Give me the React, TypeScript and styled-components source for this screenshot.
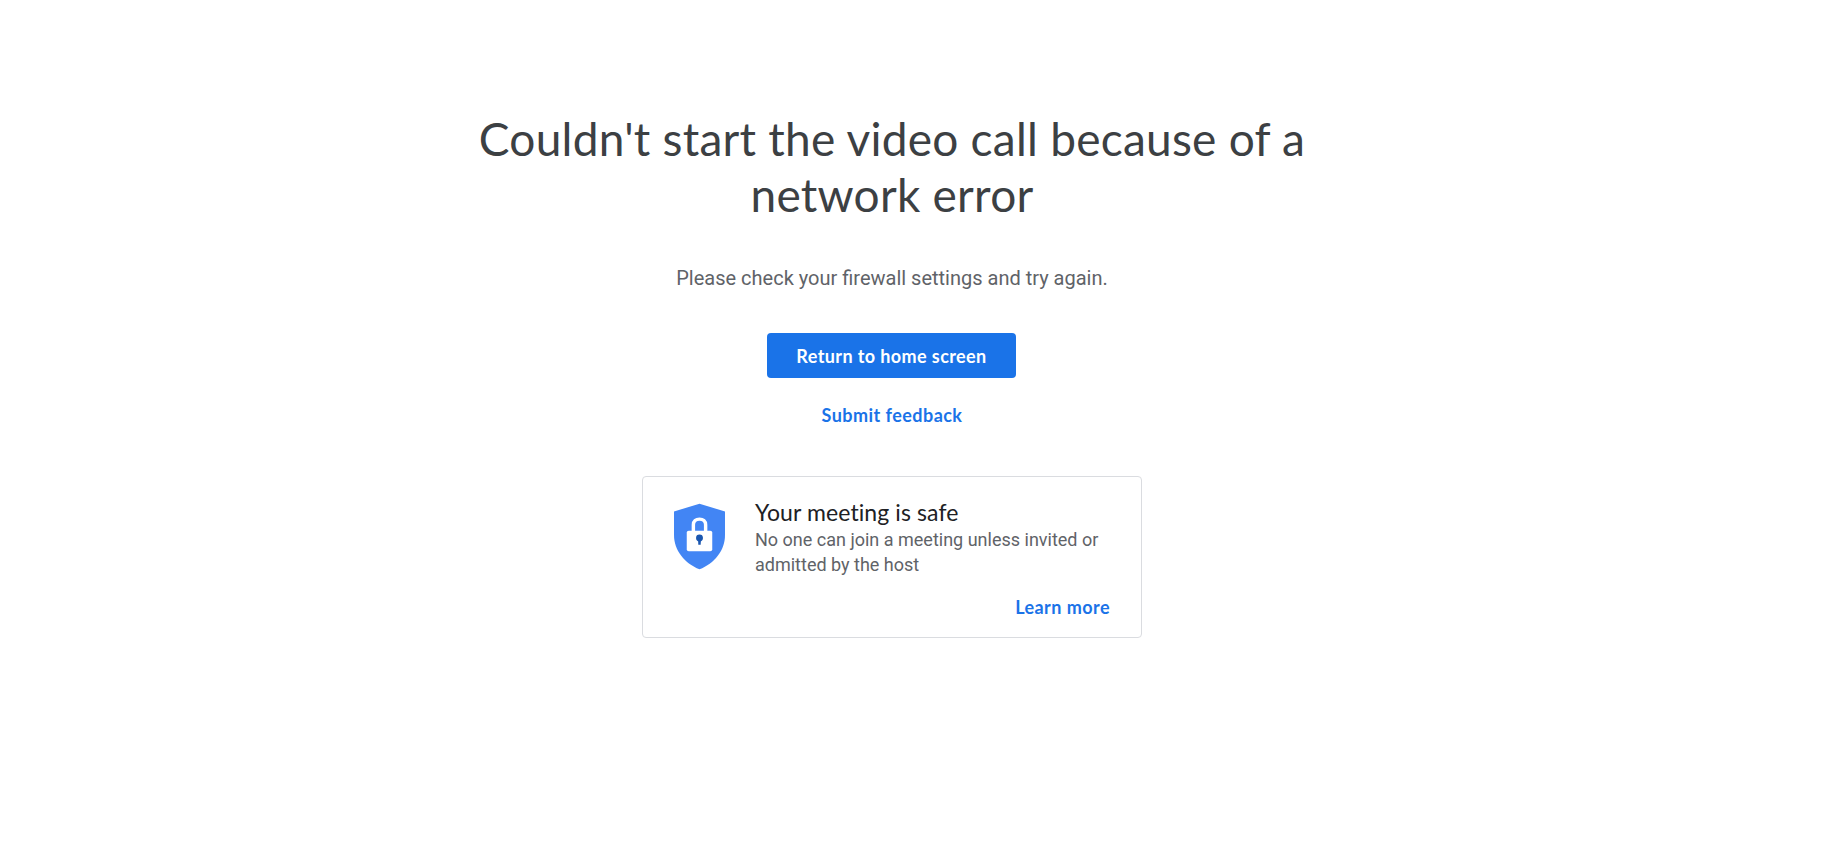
import React from "react";
import styled, { createGlobalStyle } from "styled-components";

const GlobalStyle = createGlobalStyle`
  html, body {
    margin: 0;
    padding: 0;
    background: #fff;
  }
`;

const headFont = `Lato, "Liberation Sans", sans-serif`;
const bodyFont = `Roboto, "Liberation Sans", sans-serif`;

const Page = styled.main`
  width: 100%;
  min-height: 852px;
  display: flex;
  flex-direction: column;
  align-items: center;
  padding: 111px 43px 0 0;
  box-sizing: border-box;
`;

const Title = styled.h1`
  width: 860px;
  margin: 0;
  font-family: ${headFont};
  font-size: 46px;
  font-weight: 400;
  letter-spacing: 0.25px;
  line-height: 56px;
  color: #3c4043;
  text-align: center;
`;

const Message = styled.p`
  margin: 43px 0 0;
  font-family: ${bodyFont};
  font-size: 20px;
  line-height: 24px;
  color: #5f6368;
`;

const PrimaryButton = styled.button`
  width: 249px;
  height: 45px;
  margin: 43px 1px 0 0;
  border: 0;
  border-radius: 4px;
  background: #1a73e8;
  color: #fff;
  font-family: ${headFont};
  font-size: 18px;
  font-weight: 700;
  letter-spacing: 0.4px;
`;

const TextLink = styled.a`
  font-family: ${headFont};
  font-size: 18px;
  font-weight: 700;
  letter-spacing: 0.45px;
  line-height: 24px;
  color: #1a73e8;
  text-decoration: none;
`;

const FeedbackRow = styled.div`
  margin-top: 25px;
`;

const Card = styled.section`
  width: 500px;
  height: 162px;
  margin-top: 49px;
  padding: 20px 31px 0;
  box-sizing: border-box;
  border: 1px solid #dadce0;
  border-radius: 4px;
  display: flex;
  flex-direction: column;
`;

const CardBody = styled.div`
  display: flex;
  gap: 30px;
`;

const ShieldIcon = styled.svg`
  flex: none;
  width: 51px;
  height: 68px;
  margin-top: 6px;
`;

const CardTitle = styled.h2`
  margin: 0;
  font-family: ${headFont};
  font-size: 23px;
  font-weight: 400;
  letter-spacing: 0.1px;
  line-height: 30px;
  color: #202124;
`;

const CardText = styled.p`
  margin: 0;
  font-family: ${bodyFont};
  font-size: 18px;
  line-height: 25px;
  color: #5f6368;
`;

const CardFooter = styled.div`
  margin-top: 18px;
  display: flex;
  justify-content: flex-end;
`;

export default function App() {
  return (
    <>
      <GlobalStyle />
      <Page>
        <Title>Couldn't start the video call because of a network error</Title>
        <Message>Please check your firewall settings and try again.</Message>
        <PrimaryButton>Return to home screen</PrimaryButton>
        <FeedbackRow>
          <TextLink href="#">Submit feedback</TextLink>
        </FeedbackRow>
        <Card>
          <CardBody>
            <ShieldIcon viewBox="0 0 52 68">
              <path
                d="M26 0 L52 8 V32 C52 48 41 61 26 67 C11 61 0 48 0 32 V8 Z"
                fill="#4285f4"
              />
              <path
                d="M19.75 30 V21.5 C19.75 17.8 22.3 15.75 26 15.75 C29.7 15.75 32.25 17.8 32.25 21.5 V30"
                fill="none"
                stroke="#fff"
                strokeWidth="3.5"
              />
              <rect x="13" y="27.5" width="26" height="21" rx="2" fill="#fff" />
              <circle cx="26" cy="35" r="3.5" fill="#1a56b0" />
              <path d="M24.5 36 H27.5 L27.2 42 H24.8 Z" fill="#1a56b0" />
            </ShieldIcon>
            <div>
              <CardTitle>Your meeting is safe</CardTitle>
              <CardText>
                No one can join a meeting unless invited or admitted by the host
              </CardText>
            </div>
          </CardBody>
          <CardFooter>
            <TextLink href="#">Learn more</TextLink>
          </CardFooter>
        </Card>
      </Page>
    </>
  );
}
